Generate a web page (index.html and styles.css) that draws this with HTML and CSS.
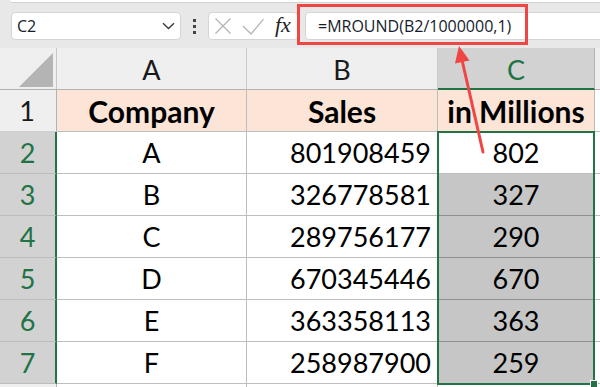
FILE: index.html
```html
<!DOCTYPE html>
<html>
<head>
<meta charset="utf-8">
<link rel="stylesheet" href="styles.css">
</head>
<body>
<div class="page">
  <div class="topbar">
    <div class="ribbon-edge"></div>
    <div class="fbar">
      <div class="namebox">
        <span class="ref">C2</span>
        <svg class="chev" width="13" height="8" viewBox="0 0 13 8"><path d="M1 1.2 L6.5 6.6 L12 1.2" fill="none" stroke="#3a3a3a" stroke-width="1.4"/></svg>
      </div>
      <div class="dots"><i></i><i></i><i></i></div>
      <div class="fxbox">
        <svg class="ico-x" width="16" height="16" viewBox="0 0 16 16"><path d="M0.5 0.5 L15.5 15.5 M15.5 0.5 L0.5 15.5" stroke="#b4b4b4" stroke-width="1.3" fill="none"/></svg>
        <svg class="ico-check" width="22" height="17" viewBox="0 0 22 17"><path d="M1 8 L9 16 L21.5 1.2" fill="none" stroke="#b4b4b4" stroke-width="1.3"/></svg>
        <span class="fx">fx</span>
      </div>
      <div class="input"><span class="formula">=MROUND(B2/1000000,1)</span></div>
    </div>
  </div>

  <div class="sheet">
    <div class="cell corner"><div class="tri"></div></div>
    <div class="cell colhead">A</div>
    <div class="cell colhead">B</div>
    <div class="cell colhead sel">C</div>
    <div class="cell colhead last"></div>

    <div class="cell rowhead">1</div>
    <div class="cell title">Company</div>
    <div class="cell title">Sales</div>
    <div class="cell title">in Millions</div>
    <div class="cell blank"></div>

    <div class="cell rowhead sel">2</div>
    <div class="cell">A</div>
    <div class="cell num">801908459</div>
    <div class="cell active">802</div>
    <div class="cell blank"></div>

    <div class="cell rowhead sel">3</div>
    <div class="cell">B</div>
    <div class="cell num">326778581</div>
    <div class="cell shade">327</div>
    <div class="cell blank"></div>

    <div class="cell rowhead sel">4</div>
    <div class="cell">C</div>
    <div class="cell num">289756177</div>
    <div class="cell shade">290</div>
    <div class="cell blank"></div>

    <div class="cell rowhead sel">5</div>
    <div class="cell">D</div>
    <div class="cell num">670345446</div>
    <div class="cell shade">670</div>
    <div class="cell blank"></div>

    <div class="cell rowhead sel">6</div>
    <div class="cell">E</div>
    <div class="cell num">363358113</div>
    <div class="cell shade">363</div>
    <div class="cell blank"></div>

    <div class="cell rowhead sel">7</div>
    <div class="cell">F</div>
    <div class="cell num">258987900</div>
    <div class="cell shade">259</div>
    <div class="cell blank"></div>

    <div class="cell rowhead"></div>
    <div class="cell"></div>
    <div class="cell"></div>
    <div class="cell"></div>
    <div class="cell blank"></div>
  </div>

  <div class="selection"></div>
  <div class="fill-handle"></div>
  <div class="callout"></div>
  <svg class="arrow" width="600" height="387" viewBox="0 0 600 387">
    <line x1="483" y1="152" x2="462" y2="60" stroke="#ef4545" stroke-width="3" stroke-linecap="round"/>
    <polygon points="459,46 469.5,60.5 455,63.5" fill="#ef4545"/>
  </svg>
</div>
</body>
</html>
```

FILE: styles.css
```css
html, body {
  margin: 0;
  padding: 0;
}
body {
  width: 600px;
  height: 387px;
  overflow: hidden;
  background: #e8e8e8;
}
.page {
  position: relative;
  width: 600px;
  height: 387px;
  overflow: hidden;
}

/* ---------- formula bar ---------- */
.topbar {
  height: 48px;
  background: #e8e8e8;
}
.ribbon-edge {
  height: 2px;
  margin-left: 10px;
  margin-right: -10px;
  background: #ffffff;
  border-bottom: 1px solid #d2d2d2;
  border-bottom-left-radius: 4px;
}
.fbar {
  display: flex;
  align-items: stretch;
  height: 28px;
  margin-top: 9px;
  padding-left: 11px;
}
.namebox {
  box-sizing: border-box;
  width: 170px;
  background: #fff;
  border: 1px solid #d5d5d5;
  border-radius: 4px;
  display: flex;
  align-items: center;
  justify-content: space-between;
  padding: 0 5px 0 5px;
}
.ref {
  font-family: "Open Sans", "Noto Sans", sans-serif;
  font-size: 16px;
  color: #151c2c;
}
.dots {
  width: 27px;
  display: flex;
  flex-direction: column;
  align-items: center;
  justify-content: center;
  gap: 3px;
}
.dots i {
  display: block;
  width: 3px;
  height: 3px;
  background: #444;
}
.fxbox {
  box-sizing: border-box;
  width: 90px;
  background: #fff;
  border: 1px solid #d5d5d5;
  border-radius: 4px;
  display: flex;
  align-items: center;
  padding-left: 6px;
}
.ico-x {
  margin-right: 11px;
}
.ico-check {
  margin-right: 11px;
  margin-top: 1px;
}
.fx {
  font-family: "Liberation Serif", "DejaVu Serif", serif;
  font-style: italic;
  font-size: 22px;
  color: #222;
  line-height: 1;
  margin-top: -2px;
}
.input {
  flex: 1;
  margin-left: 7px;
  margin-right: -20px;
  background: #fff;
  border: 1px solid #d5d5d5;
  border-radius: 4px;
  display: flex;
  align-items: center;
  padding-left: 12px;
}
.formula {
  font-family: "Open Sans", "Noto Sans", sans-serif;
  font-size: 16px;
  color: #151c2c;
}

/* ---------- sheet ---------- */
.sheet {
  display: grid;
  grid-template-columns: 57px 190px 191px 157px 1fr;
  grid-auto-rows: 42px;
  background: #fff;
}
.cell {
  box-sizing: border-box;
  border-right: 1px solid #bdbdbd;
  border-bottom: 1px solid #bdbdbd;
  display: flex;
  align-items: center;
  justify-content: center;
  font-family: "Lato", "Carlito", sans-serif;
  font-size: 27px;
  line-height: 42px;
  color: #000;
  white-space: nowrap;
  overflow: hidden;
}
.cell.blank {
  border-right: none;
}
.corner {
  background: #efefef;
  justify-content: flex-end;
  align-items: flex-end;
  padding: 0 3px 2px 0;
  border-right-color: #c6c6c6;
  border-bottom-color: #b2b2b2;
}
.tri {
  width: 34px;
  height: 34px;
  background: #b4b4b4;
  clip-path: polygon(100% 0, 100% 100%, 0 100%);
}
.colhead {
  background: #efefef;
  font-size: 27px;
  color: #1a1a1a;
  padding-top: 3px;
  border-right-color: #c9c9c9;
  border-bottom-color: #b2b2b2;
}
.colhead.sel {
  background: #d2d2d2;
  color: #217346;
  border-bottom: 2px solid #217346;
  border-right-color: #b4b4b4;
}
.colhead.last {
  border-right: none;
}
.rowhead {
  background: #efefef;
  color: #1a1a1a;
  font-size: 27px;
  border-right-color: #b2b2b2;
  border-bottom-color: #cfcfcf;
  padding-right: 2px;
}
.rowhead.sel {
  background: #d2d2d2;
  color: #217346;
  border-right: 2px solid #217346;
  border-bottom-color: #bcbcbc;
  padding-right: 0;
}
.title {
  background: #fce4d6;
  font-weight: 700;
  font-size: 30px;
  padding-top: 1px;
}
.num {
  justify-content: flex-end;
  padding-right: 6px;
}
.shade {
  background: #c6c6c6;
  border-bottom-color: #8f8f8f;
}
.active {
  background: #fff;
}

/* ---------- overlays ---------- */
.selection {
  position: absolute;
  left: 437px;
  top: 131px;
  width: 158px;
  height: 254px;
  box-sizing: border-box;
  border: 2px solid #217346;
}
.fill-handle {
  position: absolute;
  left: 590px;
  top: 380px;
  width: 6px;
  height: 6px;
  background: #217346;
  border: 1px solid #fff;
}
.callout {
  position: absolute;
  left: 297px;
  top: 4px;
  width: 231px;
  height: 41px;
  box-sizing: border-box;
  border: 3px solid #ef4545;
}
.arrow {
  position: absolute;
  left: 0;
  top: 0;
  pointer-events: none;
}
```
